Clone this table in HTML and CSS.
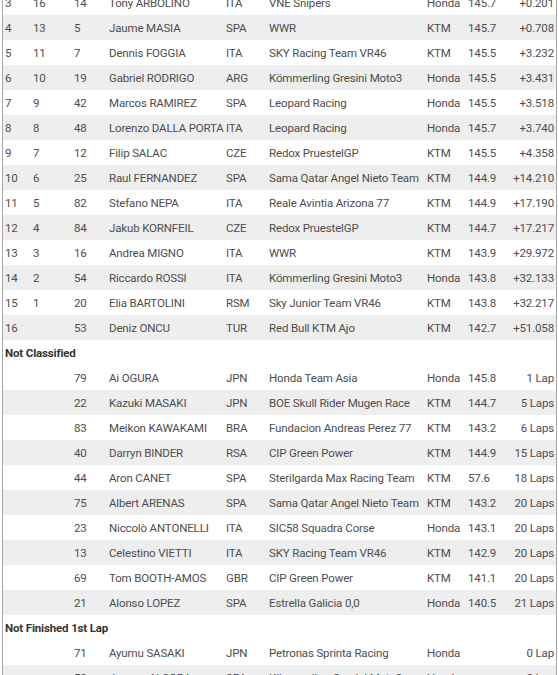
FILE: index.html
```html
<!DOCTYPE html>
<html>
<head>
<meta charset="utf-8">
<link rel="stylesheet" href="styles.css">
</head>
<body>
<div class="frame">
<table class="results">
<colgroup>
<col class="c-pos"><col class="c-grid"><col class="c-num"><col class="c-name"><col class="c-nat"><col class="c-team"><col class="c-bike"><col class="c-speed"><col class="c-time">
</colgroup>
<tbody>
<tr><td>3</td><td>16</td><td>14</td><td>Tony ARBOLINO</td><td>ITA</td><td>VNE Snipers</td><td>Honda</td><td>145.7</td><td class="t">+0.201</td></tr>
<tr class="alt"><td>4</td><td>13</td><td>5</td><td>Jaume MASIA</td><td>SPA</td><td>WWR</td><td>KTM</td><td>145.7</td><td class="t">+0.708</td></tr>
<tr><td>5</td><td>11</td><td>7</td><td>Dennis FOGGIA</td><td>ITA</td><td>SKY Racing Team VR46</td><td>KTM</td><td>145.5</td><td class="t">+3.232</td></tr>
<tr class="alt"><td>6</td><td>10</td><td>19</td><td>Gabriel RODRIGO</td><td>ARG</td><td>Kömmerling Gresini Moto3</td><td>Honda</td><td>145.5</td><td class="t">+3.431</td></tr>
<tr><td>7</td><td>9</td><td>42</td><td>Marcos RAMIREZ</td><td>SPA</td><td>Leopard Racing</td><td>Honda</td><td>145.5</td><td class="t">+3.518</td></tr>
<tr class="alt"><td>8</td><td>8</td><td>48</td><td>Lorenzo DALLA PORTA</td><td>ITA</td><td>Leopard Racing</td><td>Honda</td><td>145.7</td><td class="t">+3.740</td></tr>
<tr><td>9</td><td>7</td><td>12</td><td>Filip SALAC</td><td>CZE</td><td>Redox PruestelGP</td><td>KTM</td><td>145.5</td><td class="t">+4.358</td></tr>
<tr class="alt"><td>10</td><td>6</td><td>25</td><td>Raul FERNANDEZ</td><td>SPA</td><td>Sama Qatar Angel Nieto Team</td><td>KTM</td><td>144.9</td><td class="t">+14.210</td></tr>
<tr><td>11</td><td>5</td><td>82</td><td>Stefano NEPA</td><td>ITA</td><td>Reale Avintia Arizona 77</td><td>KTM</td><td>144.9</td><td class="t">+17.190</td></tr>
<tr class="alt"><td>12</td><td>4</td><td>84</td><td>Jakub KORNFEIL</td><td>CZE</td><td>Redox PruestelGP</td><td>KTM</td><td>144.7</td><td class="t">+17.217</td></tr>
<tr><td>13</td><td>3</td><td>16</td><td>Andrea MIGNO</td><td>ITA</td><td>WWR</td><td>KTM</td><td>143.9</td><td class="t">+29.972</td></tr>
<tr class="alt"><td>14</td><td>2</td><td>54</td><td>Riccardo ROSSI</td><td>ITA</td><td>Kömmerling Gresini Moto3</td><td>Honda</td><td>143.8</td><td class="t">+32.133</td></tr>
<tr><td>15</td><td>1</td><td>20</td><td>Elia BARTOLINI</td><td>RSM</td><td>Sky Junior Team VR46</td><td>KTM</td><td>143.8</td><td class="t">+32.217</td></tr>
<tr class="alt"><td>16</td><td></td><td>53</td><td>Deniz ONCU</td><td>TUR</td><td>Red Bull KTM Ajo</td><td>KTM</td><td>142.7</td><td class="t">+51.058</td></tr>
<tr class="section"><td colspan="9">Not Classified</td></tr>
<tr><td></td><td></td><td>79</td><td>Ai OGURA</td><td>JPN</td><td>Honda Team Asia</td><td>Honda</td><td>145.8</td><td class="t">1 Lap</td></tr>
<tr class="alt"><td></td><td></td><td>22</td><td>Kazuki MASAKI</td><td>JPN</td><td>BOE Skull Rider Mugen Race</td><td>KTM</td><td>144.7</td><td class="t">5 Laps</td></tr>
<tr><td></td><td></td><td>83</td><td>Meikon KAWAKAMI</td><td>BRA</td><td>Fundacion Andreas Perez 77</td><td>KTM</td><td>143.2</td><td class="t">6 Laps</td></tr>
<tr class="alt"><td></td><td></td><td>40</td><td>Darryn BINDER</td><td>RSA</td><td>CIP Green Power</td><td>KTM</td><td>144.9</td><td class="t">15 Laps</td></tr>
<tr><td></td><td></td><td>44</td><td>Aron CANET</td><td>SPA</td><td>Sterilgarda Max Racing Team</td><td>KTM</td><td>57.6</td><td class="t">18 Laps</td></tr>
<tr class="alt"><td></td><td></td><td>75</td><td>Albert ARENAS</td><td>SPA</td><td>Sama Qatar Angel Nieto Team</td><td>KTM</td><td>143.2</td><td class="t">20 Laps</td></tr>
<tr><td></td><td></td><td>23</td><td>Niccolò ANTONELLI</td><td>ITA</td><td>SIC58 Squadra Corse</td><td>Honda</td><td>143.1</td><td class="t">20 Laps</td></tr>
<tr class="alt"><td></td><td></td><td>13</td><td>Celestino VIETTI</td><td>ITA</td><td>SKY Racing Team VR46</td><td>KTM</td><td>142.9</td><td class="t">20 Laps</td></tr>
<tr><td></td><td></td><td>69</td><td>Tom BOOTH-AMOS</td><td>GBR</td><td>CIP Green Power</td><td>KTM</td><td>141.1</td><td class="t">20 Laps</td></tr>
<tr class="alt"><td></td><td></td><td>21</td><td>Alonso LOPEZ</td><td>SPA</td><td>Estrella Galicia 0,0</td><td>Honda</td><td>140.5</td><td class="t">21 Laps</td></tr>
<tr class="section"><td colspan="9">Not Finished 1st Lap</td></tr>
<tr><td></td><td></td><td>71</td><td>Ayumu SASAKI</td><td>JPN</td><td>Petronas Sprinta Racing</td><td>Honda</td><td></td><td class="t">0 Lap</td></tr>
<tr class="alt"><td></td><td></td><td>52</td><td>Jeremy ALCOBA</td><td>SPA</td><td>Kömmerling Gresini Moto3</td><td>Honda</td><td></td><td class="t">0 Lap</td></tr>
</tbody>
</table>
</div>
</body>
</html>
```
FILE: styles.css
```css
html, body {
  margin: 0;
  padding: 0;
  background: #ffffff;
}
body {
  font-family: "Roboto", "Lato", sans-serif;
  font-size: 11.5px;
  letter-spacing: -0.15px;
  color: #4d4d4d;
  overflow: hidden;
}
.frame {
  margin-left: 2px;
  margin-top: -10px;
  width: 553px;
  border-left: 1px solid #a8a8a8;
  border-right: 1px solid #a8a8a8;
}
.results {
  width: 100%;
  border-collapse: collapse;
  table-layout: fixed;
}
.c-pos { width: 28px; }
.c-grid { width: 41px; }
.c-num { width: 35px; }
.c-name { width: 117px; }
.c-nat { width: 43px; }
.c-team { width: 158px; }
.c-bike { width: 41px; }
.c-speed { width: 40px; }
.c-time { width: auto; }
.results td {
  height: 25px;
  padding: 0 0 0 2px;
  white-space: nowrap;
  overflow: hidden;
  vertical-align: middle;
}
.results td.t {
  text-align: right;
  padding: 0 2px 0 0;
}
.results tr.alt td {
  background: #eeeeee;
}
.results tr.section td {
  font-weight: bold;
  color: #333333;
}
```
